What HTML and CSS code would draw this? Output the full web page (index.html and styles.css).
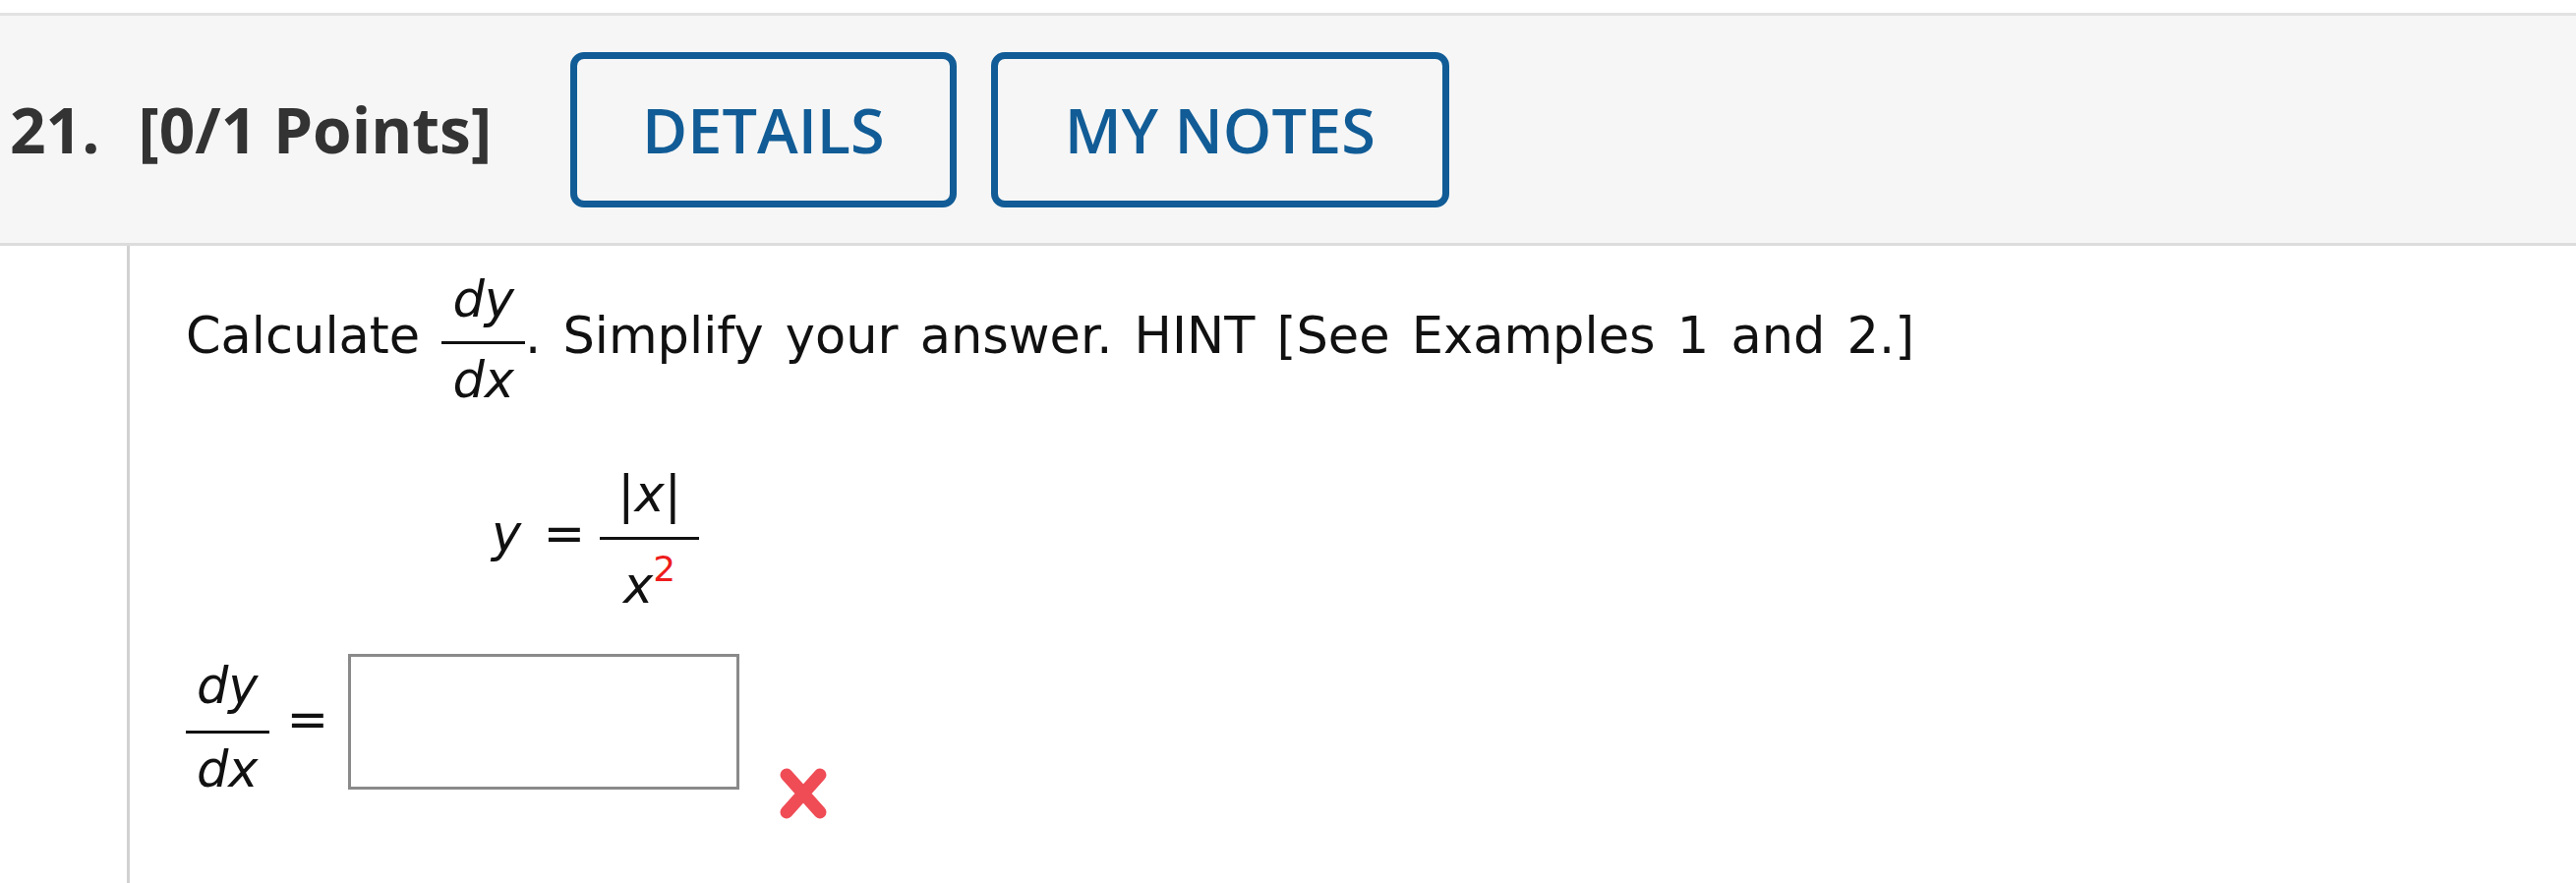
FILE: index.html
```html
<!DOCTYPE html>
<html lang="en">
<head>
<meta charset="utf-8">
<title>Question 21</title>
<link rel="stylesheet" href="styles.css">
</head>
<body>
<header class="qhead">
  <span class="qnum">21.</span>
  <span class="qpts">[0/1 Points]</span>
  <div class="actions">
    <button class="btn" type="button">DETAILS</button>
    <button class="btn" type="button">MY NOTES</button>
  </div>
</header>
<main class="qbody">
  <p class="prompt">Calculate <span class="frac"><span class="num"><i>dy</i></span><span class="den"><i>dx</i></span></span>. Simplify your answer. HINT [See Examples 1 and 2.]</p>
  <div class="equation"><i>y</i> = <span class="frac frac-eq"><span class="num">|<i>x</i>|</span><span class="den"><i>x</i><sup class="pow">2</sup></span></span></div>
  <div class="answer">
    <span class="frac frac-ans"><span class="num"><i>dy</i></span><span class="den"><i>dx</i></span></span>
    <span class="eq-sign">=</span>
    <input class="ans-box" type="text" aria-label="answer">
    <svg class="wrong" width="52" height="56" viewBox="0 0 52 56" aria-hidden="true">
      <path d="M9 9 L43 47 M43 9 L9 47" stroke="#ef4c56" stroke-width="13" stroke-linecap="round" fill="none"/>
    </svg>
  </div>
</main>
</body>
</html>
```
FILE: styles.css
```css
html, body {
  margin: 0;
  padding: 0;
  background: #ffffff;
}
body {
  min-height: 100vh;
  display: flex;
  flex-direction: column;
}
.qhead {
  margin-top: 13px;
  height: 231px;
  border-top: 3px solid #e2e2e2;
  border-bottom: 3px solid #dcdcdc;
  background: #f6f6f6;
  display: flex;
  align-items: center;
  padding-left: 10px;
  font-family: "Open Sans", "Noto Sans", sans-serif;
}
.qnum, .qpts {
  font-size: 64px;
  font-weight: 700;
  color: #333333;
}
.qnum {
  margin-right: 39px;
}
.actions {
  display: flex;
  gap: 35px;
  margin-left: 80px;
}
.btn {
  height: 158px;
  padding: 0 66px;
  border: 7px solid #115c96;
  border-radius: 14px;
  background: transparent;
  color: #115c96;
  font-family: "Open Sans", "Noto Sans", sans-serif;
  font-size: 63px;
  font-weight: 600;
}
.btn + .btn {
  padding: 0 68px;
}
.qbody {
  flex: 1;
  margin-left: 129px;
  border-left: 3px solid #d2d2d2;
  padding: 30px 0 0 57px;
  font-family: "DejaVu Sans", Verdana, sans-serif;
  font-size: 51px;
  word-spacing: 6px;
  color: #111111;
}
.prompt {
  margin: 0;
}
.frac {
  display: inline-flex;
  flex-direction: column;
  align-items: stretch;
  text-align: center;
  vertical-align: 37px;
  word-spacing: 0;
}
.frac i {
  font-style: oblique;
}
.frac .num {
  line-height: 50px;
  padding: 0 11px 17px;
  border-bottom: 3px solid #111111;
}
.frac .den {
  line-height: 50px;
  padding: 12px 11px 0;
}
.equation {
  margin: 66px 0 0 311px;
}
.frac-eq {
  vertical-align: 40px;
  margin-left: -7px;
}
.frac-eq .num {
  padding: 0 18px 18px;
}
.frac-eq .den {
  padding-top: 22px;
}
.pow {
  font-size: 36px;
  line-height: 0;
  vertical-align: 22px;
  color: #ee1c1c;
}
.answer {
  margin-top: 44px;
  display: flex;
  align-items: flex-start;
}
.frac-ans {
  margin-top: 8px;
}
.frac-ans .num {
  padding-bottom: 20px;
}
.eq-sign {
  line-height: 50px;
  margin: 42px 0 0 18px;
}
.ans-box {
  margin-left: 20px;
  width: 398px;
  height: 138px;
  box-sizing: border-box;
  border: 3px solid #8a8a8a;
  background: #ffffff;
  padding: 0;
}
.wrong {
  margin: 114px 0 0 39px;
}
```
